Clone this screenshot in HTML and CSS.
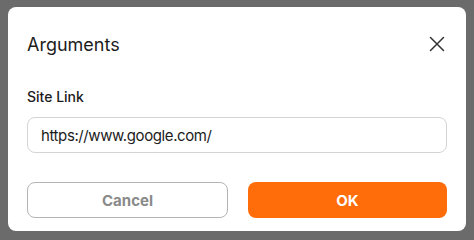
FILE: index.html
```html
<!DOCTYPE html>
<html>
<head>
<meta charset="utf-8">
<link rel="stylesheet" href="styles.css">
</head>
<body>
<div class="dialog">
  <div class="header">
    <h1 class="title">Arguments</h1>
    <button class="close" aria-label="Close">
      <svg width="16" height="16" viewBox="0 0 16 16"><path d="M1.5 1.5 L14.5 14.5 M14.5 1.5 L1.5 14.5" stroke="#333" stroke-width="1.5" stroke-linecap="round" fill="none"/></svg>
    </button>
  </div>
  <label class="label">Site Link</label>
  <div class="input">https://www.google.com/</div>
  <div class="actions">
    <button class="btn cancel">Cancel</button>
    <button class="btn ok">OK</button>
  </div>
</div>
</body>
</html>
```
FILE: styles.css
```css
html, body {
  margin: 0;
  padding: 0;
  background: #6b6b6b;
  height: 100%;
}
body {
  padding: 7px 8px 0 8px;
  box-sizing: border-box;
  font-family: Inter, "Liberation Sans", sans-serif;
}
.dialog {
  width: 458px;
  height: 224px;
  background: #fff;
  border-radius: 8px;
  box-sizing: border-box;
  padding: 24px 19px 0 19px;
  display: flex;
  flex-direction: column;
}
.header {
  display: flex;
  align-items: center;
  justify-content: space-between;
  height: 26px;
}
.title {
  margin: 0;
  font-size: 18px;
  font-weight: 400;
  color: #1c1c1c;
  letter-spacing: 0;
}
.close {
  border: 0;
  background: none;
  padding: 0;
  margin-right: 2px;
  width: 16px;
  height: 16px;
  display: flex;
}
.label {
  margin-top: 31px;
  font-size: 14px;
  font-weight: 500;
  color: #1c1c1c;
  line-height: 18px;
}
.input {
  margin-top: 11px;
  height: 36px;
  border: 1px solid #d4d4d4;
  border-radius: 8px;
  box-sizing: border-box;
  padding: 0 13px;
  display: flex;
  align-items: center;
  font-size: 15px;
  letter-spacing: -0.4px;
  color: #1c1c1c;
  width: 420px;
}
.actions {
  margin-top: 29px;
  display: flex;
  gap: 20px;
  width: 420px;
}
.btn {
  flex: 1;
  height: 36px;
  border-radius: 8px;
  font-family: Inter, "Liberation Sans", sans-serif;
  font-size: 15px;
  font-weight: 700;
  box-sizing: border-box;
}
.cancel {
  background: #fff;
  border: 1px solid #b4b4b4;
  color: #8a8a8a;
}
.ok {
  background: #ff6c0a;
  border: 0;
  color: #fff;
}
```
